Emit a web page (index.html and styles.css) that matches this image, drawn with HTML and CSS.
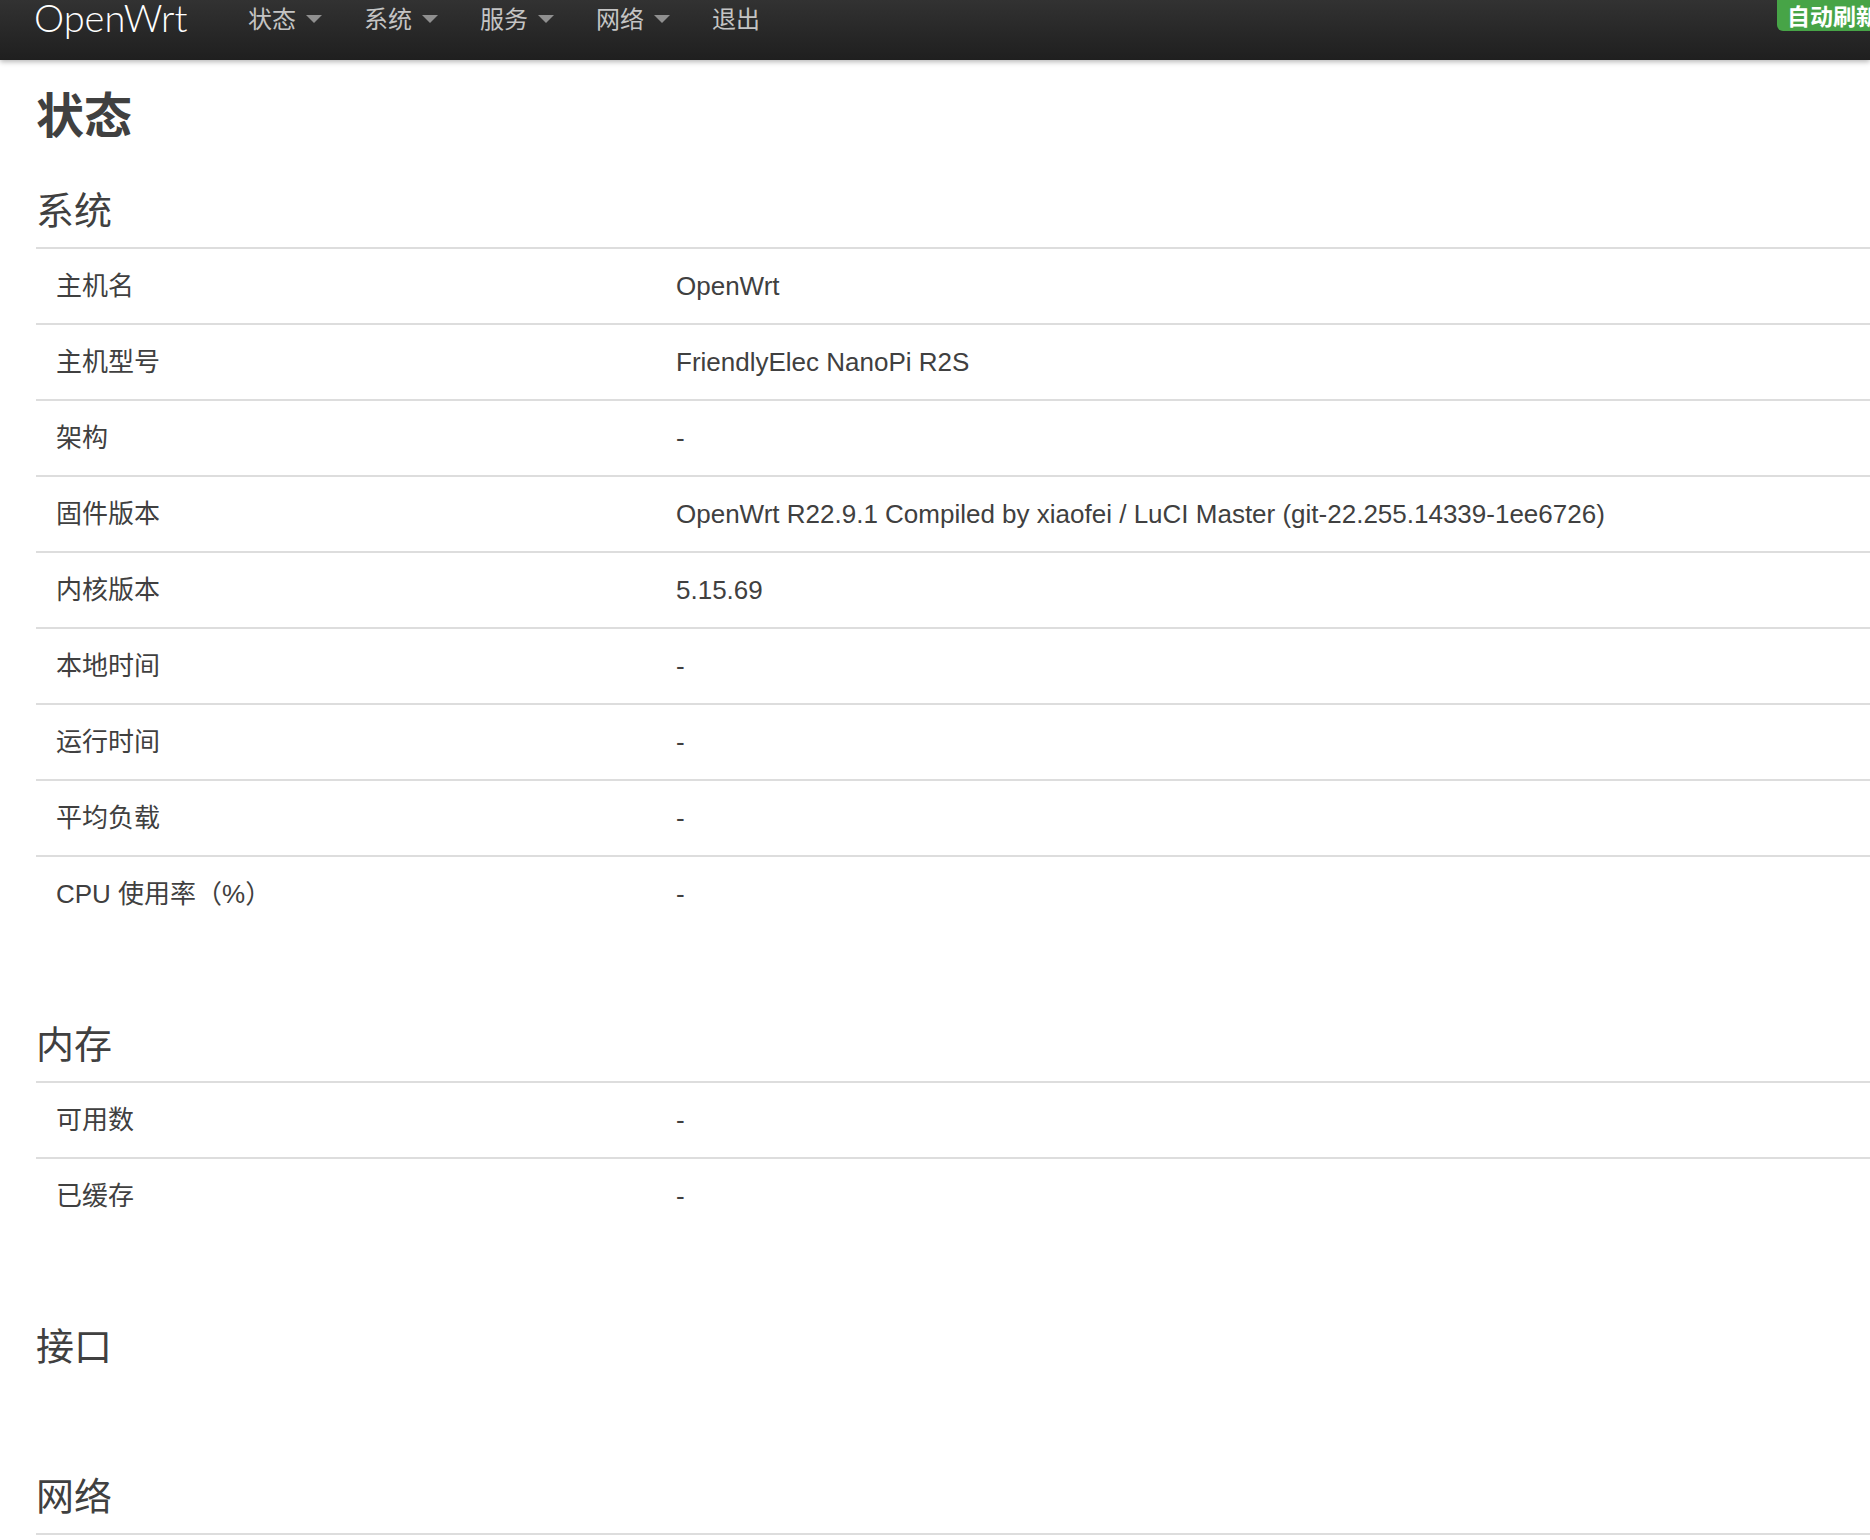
FILE: index.html
```html
<!DOCTYPE html>
<html lang="zh-CN">
<head>
<meta charset="utf-8">
<title>OpenWrt - 状态</title>
<link rel="stylesheet" href="styles.css">
</head>
<body>
<header class="topbar">
  <a class="brand" href="#">OpenWrt</a>
  <ul class="nav">
    <li class="nav-item"><span class="nav-text">状态</span><span class="caret"></span></li>
    <li class="nav-item"><span class="nav-text">系统</span><span class="caret"></span></li>
    <li class="nav-item"><span class="nav-text">服务</span><span class="caret"></span></li>
    <li class="nav-item"><span class="nav-text">网络</span><span class="caret"></span></li>
    <li class="nav-item"><span class="nav-text">退出</span></li>
  </ul>
  <span class="refresh-badge">自动刷新</span>
</header>

<main class="page">
  <h1 class="page-title">状态</h1>

  <section class="section">
    <h2 class="section-title">系统</h2>
    <table class="info-table">
      <tr><td class="label">主机名</td><td class="value">OpenWrt</td></tr>
      <tr><td class="label">主机型号</td><td class="value">FriendlyElec NanoPi R2S</td></tr>
      <tr><td class="label">架构</td><td class="value">-</td></tr>
      <tr><td class="label">固件版本</td><td class="value">OpenWrt R22.9.1 Compiled by xiaofei / LuCI Master (git-22.255.14339-1ee6726)</td></tr>
      <tr><td class="label">内核版本</td><td class="value">5.15.69</td></tr>
      <tr><td class="label">本地时间</td><td class="value">-</td></tr>
      <tr><td class="label">运行时间</td><td class="value">-</td></tr>
      <tr><td class="label">平均负载</td><td class="value">-</td></tr>
      <tr><td class="label">CPU 使用率（%）</td><td class="value">-</td></tr>
    </table>
  </section>

  <section class="section">
    <h2 class="section-title">内存</h2>
    <table class="info-table">
      <tr><td class="label">可用数</td><td class="value">-</td></tr>
      <tr><td class="label">已缓存</td><td class="value">-</td></tr>
    </table>
  </section>

  <section class="section">
    <h2 class="section-title">接口</h2>
  </section>

  <section class="section">
    <h2 class="section-title">网络</h2>
    <table class="info-table">
      <tr><td class="label">IPv4 上游</td><td class="value">-</td></tr>
    </table>
  </section>
</main>
</body>
</html>
```

FILE: styles.css
```css
html, body {
  overflow-x: hidden;
}

body {
  margin: 0;
  background: #fff;
  color: #404040;
  font-family: "Liberation Sans", "Noto Sans CJK SC", sans-serif;
}

.topbar {
  position: relative;
  display: flex;
  align-items: flex-start;
  height: 60px;
  background: linear-gradient(#323232, #1f1f1f);
  box-shadow: 0 2px 5px rgba(0, 0, 0, 0.28);
}

.brand {
  width: 152px;
  margin-left: 34px;
  color: #fff;
  text-decoration: none;
  font-family: "Lato", "Liberation Sans", sans-serif;
  font-weight: 300;
  font-size: 38px;
  line-height: 35px;
  white-space: nowrap;
}

.nav {
  display: flex;
  gap: 42px;
  margin: 0 0 0 62px;
  padding: 6px 0 0;
  list-style: none;
}

.nav-item {
  display: flex;
  align-items: center;
  gap: 10px;
  color: #c4c4c4;
  font-family: "Noto Sans CJK SC", sans-serif;
  font-size: 24px;
  line-height: 24px;
}

.caret {
  width: 0;
  height: 0;
  margin-top: 2px;
  border-left: 8px solid transparent;
  border-right: 8px solid transparent;
  border-top: 8px solid #8f8f8f;
}

.refresh-badge {
  position: absolute;
  left: 1777px;
  top: 0;
  height: 31px;
  padding: 0 10px;
  border-radius: 0 0 0 6px;
  background: #47a447;
  color: #fff;
  font-family: "Noto Sans CJK SC", sans-serif;
  font-weight: 700;
  font-size: 23px;
  line-height: 31px;
  white-space: nowrap;
}

.page {
  padding: 0 0 40px 36px;
}

.page-title {
  margin: 28px 0 0;
  font-family: "Noto Sans CJK SC", sans-serif;
  font-weight: 700;
  font-size: 48px;
  line-height: 48px;
  color: #404040;
}

.section {
  display: flow-root;
  margin-top: 92px;
}

.page-title + .section {
  margin-top: 53px;
}

.section-title {
  margin: 0 0 20px;
  font-family: "Noto Sans CJK SC", sans-serif;
  font-weight: 400;
  font-size: 38px;
  line-height: 38px;
  color: #404040;
}

.info-table {
  width: 100%;
  border-collapse: collapse;
}

.info-table tr {
  border-top: 2px solid #dddddd;
}

.info-table td {
  padding: 24px 20px;
  font-size: 26px;
  line-height: 26px;
  vertical-align: middle;
  white-space: nowrap;
}

.info-table .label {
  width: 580px;
}
```
